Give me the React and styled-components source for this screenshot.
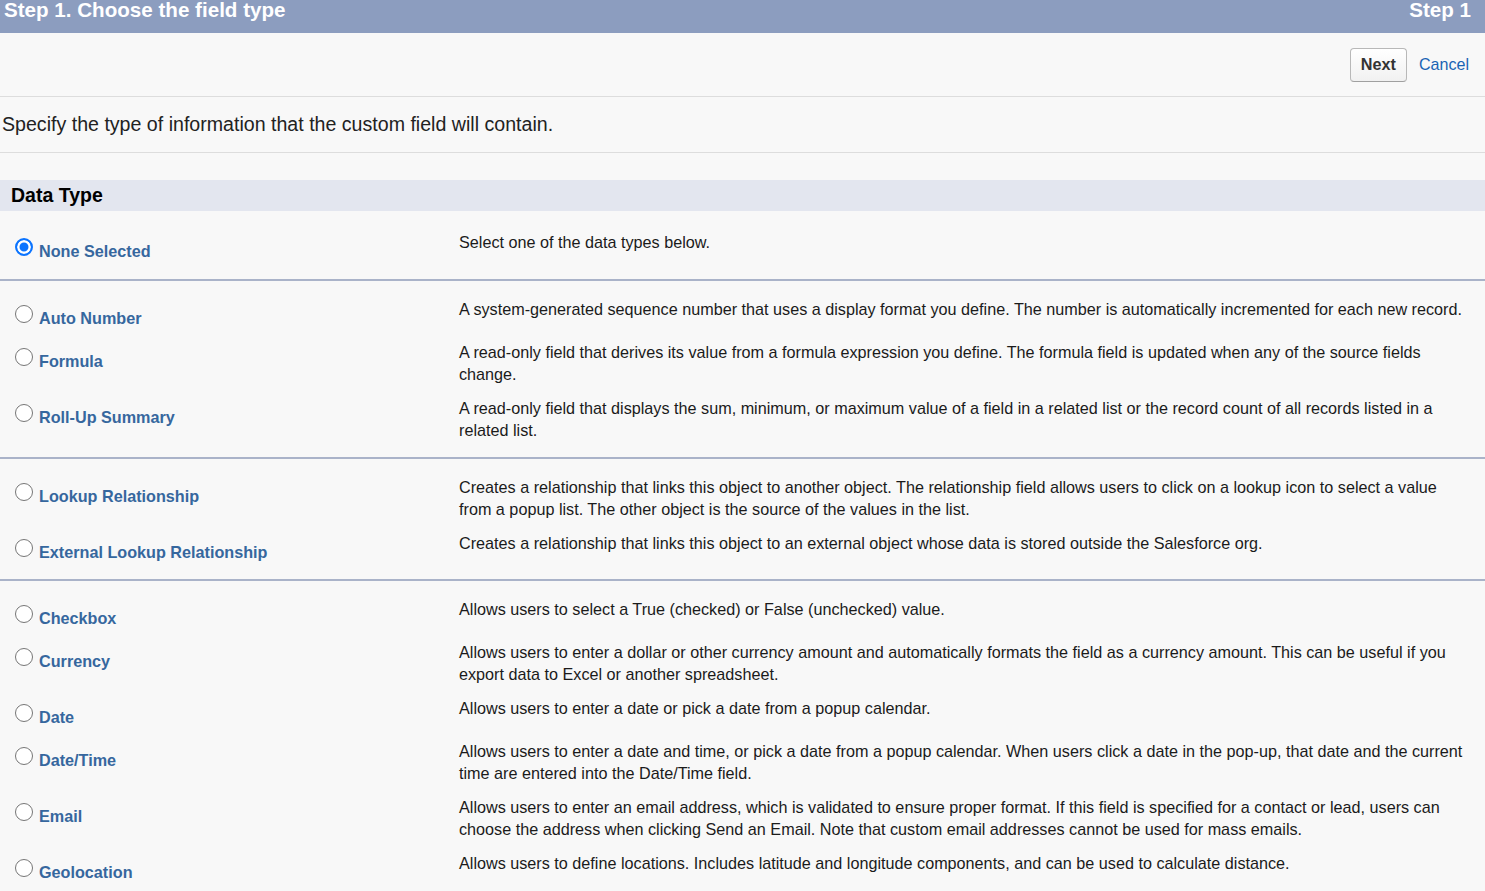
import { createGlobalStyle, styled } from 'styled-components';

const GlobalStyle = createGlobalStyle`
  html, body {
    margin: 0;
    padding: 0;
    background: #f8f8f8;
    overflow: hidden;
  }
  body {
    font-family: "Liberation Sans", Arial, sans-serif;
    color: #1b1b1b;
  }
`;

const Page = styled.div`
  display: flex;
  flex-direction: column;
  width: 100%;
`;

// the step bar is scrolled a little out of view in the reference, so its text sits at the very top
const StepHeader = styled.div`
  display: flex;
  justify-content: space-between;
  align-items: flex-start;
  height: 33px;
  padding: 0 14px 0 4px;
  background: #8c9dbf;
  color: #fff;
  font-size: 20.6px;
  font-weight: bold;
  line-height: 20px;
  overflow: hidden;
`;

const Toolbar = styled.div`
  display: flex;
  justify-content: flex-end;
  align-items: center;
  gap: 12px;
  height: 63px;
  padding-right: 16px;
  border-bottom: 1px solid #dddddd;
`;

const Button = styled.button`
  height: 34px;
  padding: 0 10px;
  border: 1px solid #b8b8b8;
  border-bottom-color: #a0a0a0;
  border-radius: 4px;
  background: linear-gradient(#ffffff, #f1f1f1);
  color: #333;
  font-family: inherit;
  font-size: 16.2px;
  font-weight: bold;
  cursor: pointer;
`;

const LinkButton = styled.a`
  color: #1a64b4;
  font-size: 16.1px;
  text-decoration: none;
  cursor: pointer;
`;

const Intro = styled.p`
  margin: 0;
  padding: 15px 2px 16px;
  font-size: 19.6px;
  line-height: 24px;
  color: #222;
  border-bottom: 1px solid #dddddd;
`;

const SectionTitle = styled.h3`
  margin: 27px 0 0;
  padding: 0 11px;
  height: 31px;
  background: #e3e6ef;
  color: #000;
  font-size: 19.5px;
  font-weight: bold;
  line-height: 31px;
`;

const Group = styled.div`
  padding: ${(p) => (p.$first ? '20px 0 5px' : '17px 0 4px')};
  border-top: ${(p) => (p.$first ? 'none' : '2px solid #aab3c9')};
`;

const Row = styled.label`
  display: grid;
  grid-template-columns: 459px 1fr;
  padding: 0 16px 12px 0;
  cursor: pointer;
`;

const Choice = styled.div`
  display: flex;
  align-items: flex-start;
  gap: 6px;
  min-height: 31px;
  padding-left: 15px;
`;

const Radio = styled.input.attrs({ type: 'radio' })`
  appearance: none;
  flex: none;
  width: 18px;
  height: 18px;
  margin: 7px 0 0;
  border: 1.5px solid #767676;
  border-radius: 50%;
  background: #fff;

  &:checked {
    border: 2px solid #0b74ff;
    background: #0b74ff;
    box-shadow: inset 0 0 0 2.5px #fff;
  }
`;

const Label = styled.span`
  margin-top: 9.5px;
  color: #36679e;
  font-size: 16.2px;
  font-weight: bold;
  line-height: 20px;
`;

const Description = styled.div`
  font-size: 16.2px;
  line-height: 22px;
  color: #1b1b1b;
`;

const groups = [
  [
    { label: 'None Selected', desc: 'Select one of the data types below.', checked: true },
  ],
  [
    {
      label: 'Auto Number',
      desc: 'A system-generated sequence number that uses a display format you define. The number is automatically incremented for each new record.',
    },
    {
      label: 'Formula',
      desc: 'A read-only field that derives its value from a formula expression you define. The formula field is updated when any of the source fields change.',
    },
    {
      label: 'Roll-Up Summary',
      desc: 'A read-only field that displays the sum, minimum, or maximum value of a field in a related list or the record count of all records listed in a related list.',
    },
  ],
  [
    {
      label: 'Lookup Relationship',
      desc: 'Creates a relationship that links this object to another object. The relationship field allows users to click on a lookup icon to select a value from a popup list. The other object is the source of the values in the list.',
    },
    {
      label: 'External Lookup Relationship',
      desc: 'Creates a relationship that links this object to an external object whose data is stored outside the Salesforce org.',
    },
  ],
  [
    { label: 'Checkbox', desc: 'Allows users to select a True (checked) or False (unchecked) value.' },
    {
      label: 'Currency',
      desc: 'Allows users to enter a dollar or other currency amount and automatically formats the field as a currency amount. This can be useful if you export data to Excel or another spreadsheet.',
    },
    { label: 'Date', desc: 'Allows users to enter a date or pick a date from a popup calendar.' },
    {
      label: 'Date/Time',
      desc: 'Allows users to enter a date and time, or pick a date from a popup calendar. When users click a date in the pop-up, that date and the current time are entered into the Date/Time field.',
    },
    {
      label: 'Email',
      desc: 'Allows users to enter an email address, which is validated to ensure proper format. If this field is specified for a contact or lead, users can choose the address when clicking Send an Email. Note that custom email addresses cannot be used for mass emails.',
    },
    {
      label: 'Geolocation',
      desc: 'Allows users to define locations. Includes latitude and longitude components, and can be used to calculate distance.',
    },
  ],
];

export default function App() {
  return (
    <Page>
      <GlobalStyle />
      <StepHeader>
        <span>Step 1. Choose the field type</span>
        <span>Step 1</span>
      </StepHeader>
      <Toolbar>
        <Button type="button">Next</Button>
        <LinkButton>Cancel</LinkButton>
      </Toolbar>
      <Intro>Specify the type of information that the custom field will contain.</Intro>
      <SectionTitle>Data Type</SectionTitle>
      {groups.map((items, gi) => (
        <Group key={gi} $first={gi === 0}>
          {items.map((item) => (
            <Row key={item.label}>
              <Choice>
                <Radio name="dtype" defaultChecked={item.checked} />
                <Label>{item.label}</Label>
              </Choice>
              <Description>{item.desc}</Description>
            </Row>
          ))}
        </Group>
      ))}
    </Page>
  );
}
